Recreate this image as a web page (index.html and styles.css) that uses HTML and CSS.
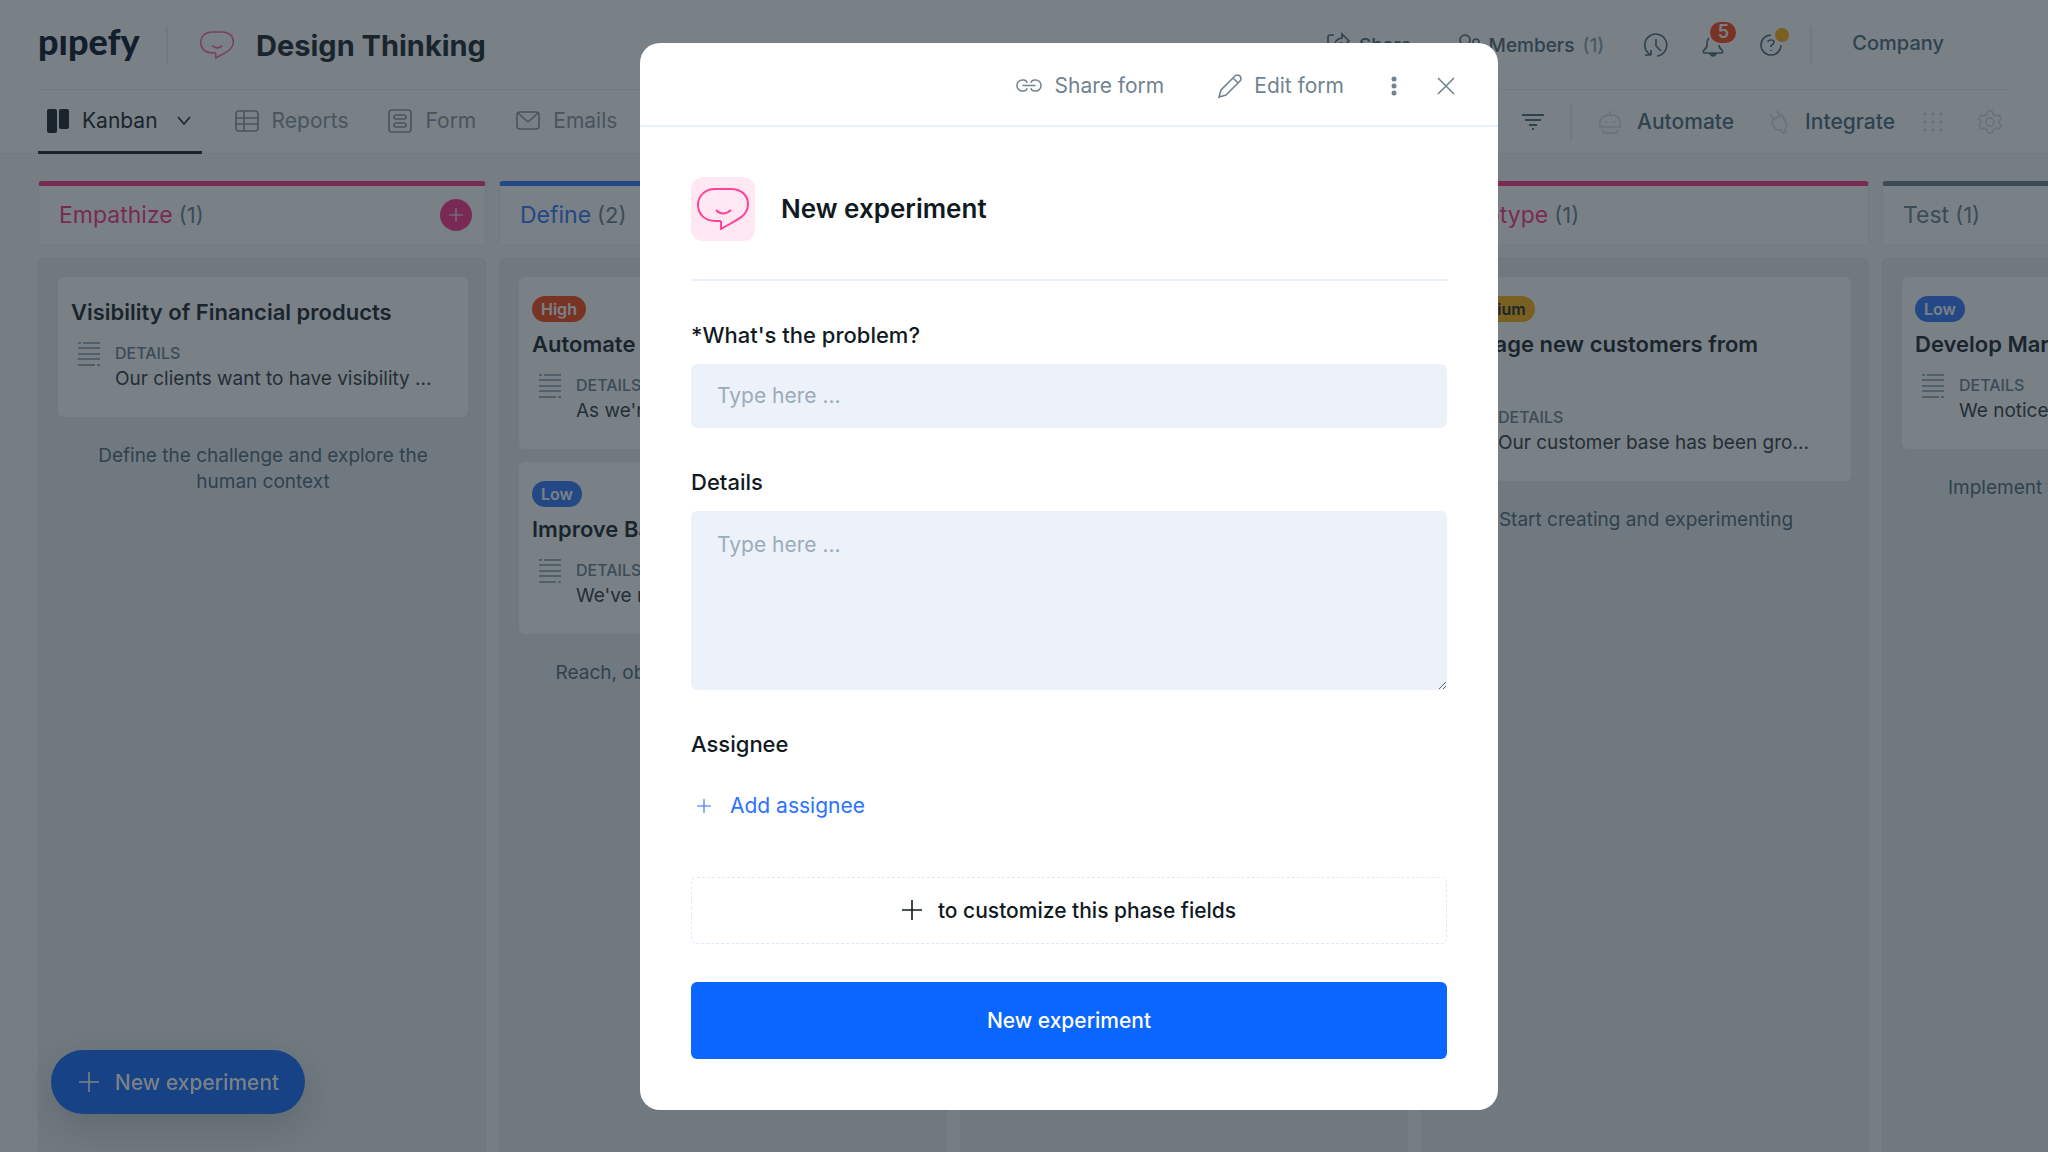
FILE: index.html
```
<!DOCTYPE html>
<html lang="en">
<head>
    <meta charset="utf-8">
    <title>Design Thinking</title>
    <link rel="stylesheet" href="styles.css">
</head>
<body>
    <!-- icons used more than once -->
    <svg width="0" height="0" class="sprite">
        <symbol id="chat" viewBox="0 0 52 42">
            <path d="M24 33H18C8 33 1 26 1 17S8 1 18 1H34C44 1 51 7 51 16C51 30 36 33 24 41V33"/>
            <path d="M19 22Q26 29 34 22"/>
        </symbol>
        <symbol id="plus" viewBox="0 0 20 20">
            <path d="M10 0V20M0 10H20"/>
        </symbol>
        <symbol id="lines" viewBox="0 0 22 26">
            <path d="M0 2H3M5 2H22M0 7H22M0 13H22M0 18H22M0 24H17M19 24H22"/>
        </symbol>
    </svg>

    <div class="page">
        <header class="topbar">
            <div class="brand">pıpefy</div>
            <div class="separator"></div>
            <svg class="icon pipe-icon" width="34" height="28"><use href="#chat"/></svg>
            <h1>Design Thinking</h1>
            <div class="top-actions">
                <a href="#" class="share">
                    <svg class="icon" width="24" height="24" viewBox="0 0 24 24"><path d="M7 2H3Q1 2 1 4V20Q1 22 3 22H19Q21 22 21 20V15M15 1L22 8L15 14V10Q9 10 7 15Q7 6 15 5Z"/></svg>
                    Share
                </a>
                <a href="#" class="members">
                    <svg class="icon" width="24" height="22" viewBox="0 0 24 22"><circle cx="8" cy="6" r="5"/><circle cx="19" cy="8" r="3"/><path d="M1 21Q1 13 8 13T15 21Z"/></svg>
                    Members <span>(1)</span>
                </a>
                <button class="icon-btn" aria-label="Activities">
                    <svg class="icon" width="24" height="24" viewBox="0 0 24 24"><path d="M7 22V17M1 22H7A11 11 0 1 1 13 23M12 6V13L17 18"/></svg>
                </button>
                <button class="icon-btn bell" aria-label="Notifications">
                    <svg class="icon" width="22" height="24" viewBox="0 0 22 24"><path d="M7 5Q5 7 5 12Q5 15 2 17Q0 20 3 20H19Q22 20 20 17Q17 15 17 12"/><path d="M8 21H14Q11 25 8 21Z" fill="currentColor"/></svg>
                    <span class="badge">5</span>
                </button>
                <button class="icon-btn help" aria-label="Help">
                    <svg class="icon" width="22" height="24" viewBox="0 0 22 24"><path d="M11 2A10 10 0 1 0 21 12"/><path d="M8 9Q8 7 11 7T14 9Q14 11 11 13V14M11 17V18"/></svg>
                    <span class="dot"></span>
                </button>
                <div class="separator"></div>
                <a href="#" class="company">Company</a>
            </div>
        </header>

        <nav class="tabs">
            <a href="#" class="tab active">
                <svg width="22" height="24" viewBox="0 0 22 24"><rect width="10" height="24" rx="2"/><rect x="12" width="10" height="20" rx="2"/></svg>
                Kanban
                <svg class="icon chevron" width="14" height="8" viewBox="0 0 14 8"><path d="M1 0L7 7L13 0"/></svg>
            </a>
            <a href="#" class="tab">
                <svg class="icon" width="24" height="22" viewBox="0 0 24 22"><rect x="1" y="1" width="22" height="20" rx="3"/><path d="M1 8H23M1 14H23M9 1V21"/></svg>
                Reports
            </a>
            <a href="#" class="tab">
                <svg class="icon" width="24" height="24" viewBox="0 0 24 24"><rect x="1" y="1" width="22" height="22" rx="3"/><rect x="6" y="6" width="12" height="4" rx="2"/><rect x="6" y="14" width="12" height="4" rx="2"/></svg>
                Form
            </a>
            <a href="#" class="tab">
                <svg class="icon" width="24" height="20" viewBox="0 0 24 20"><rect x="1" y="1" width="22" height="17" rx="3"/><path d="M2 2L12 11L22 2"/></svg>
                Emails
            </a>
            <div class="tools">
                <button class="icon-btn" aria-label="Filter">
                    <svg class="icon filter" width="22" height="18" viewBox="0 0 22 18"><path d="M0 2H22M3 7H19M7 12H15M10 16H12"/></svg>
                </button>
                <div class="separator"></div>
                <a href="#">
                    <svg class="icon faint" width="22" height="24" viewBox="0 0 22 24"><path d="M11 1V5M1 17V13Q1 5 11 5T21 13V17ZM3 20Q4 23 7 23H15Q18 23 19 20M7 11V13M15 11V13"/></svg>
                    Automate
                </a>
                <a href="#" class="integrate">
                    <svg class="icon faint" width="20" height="24" viewBox="0 0 20 24"><path d="M3 10L13 5L17 13Q19 17 16 19L17 22L14 23L12 20Q8 21 5 17Q3 14 3 10ZM5 9L1 4M11 6L8 1"/></svg>
                    Integrate
                </a>
                <button class="icon-btn apps" aria-label="Apps">
                    <svg class="faint" width="20" height="20" viewBox="0 0 20 20"><circle cx="2" cy="2" r="1.5"/><circle cx="10" cy="2" r="1.5"/><circle cx="18" cy="2" r="1.5"/><circle cx="2" cy="10" r="1.5"/><circle cx="10" cy="10" r="1.5"/><circle cx="18" cy="10" r="1.5"/><circle cx="2" cy="18" r="1.5"/><circle cx="10" cy="18" r="1.5"/><circle cx="18" cy="18" r="1.5"/></svg>
                </button>
                <button class="icon-btn" aria-label="Settings">
                    <svg class="icon faint" width="24" height="24" viewBox="0 0 24 24"><circle cx="12" cy="12" r="4"/><path d="M10 1H14L15 4L18 6L21 5L23 9L21 11V13L23 15L21 19L18 18L15 20L14 23H10L9 20L6 18L3 19L1 15L3 13V11L1 9L3 5L6 6L9 4Z"/></svg>
                </button>
            </div>
        </nav>

        <main class="board">
            <section class="column pink">
                <h2><span>Empathize</span> (1) <button class="add-card" aria-label="Add card"><svg class="icon" width="14" height="14"><use href="#plus"/></svg></button></h2>
                <div class="cards">
                    <article class="card">
                        <h3>Visibility of Financial products</h3>
                        <div class="field">
                            <svg class="icon" width="22" height="26"><use href="#lines"/></svg>
                            <div>
                                <h4>DETAILS</h4>
                                <p>Our clients want to have visibility ...</p>
                            </div>
                        </div>
                    </article>
                    <p class="hint">Define the challenge and explore the human context</p>
                </div>
            </section>

            <section class="column blue">
                <h2><span>Define</span> (2)</h2>
                <div class="cards">
                    <article class="card">
                        <div class="tag high">High</div>
                        <h3>Automate onboarding</h3>
                        <div class="field">
                            <svg class="icon" width="22" height="26"><use href="#lines"/></svg>
                            <div>
                                <h4>DETAILS</h4>
                                <p>As we're growing ...</p>
                            </div>
                        </div>
                    </article>
                    <article class="card">
                        <div class="tag low">Low</div>
                        <h3>Improve Banking app</h3>
                        <div class="field">
                            <svg class="icon" width="22" height="26"><use href="#lines"/></svg>
                            <div>
                                <h4>DETAILS</h4>
                                <p>We've received ...</p>
                            </div>
                        </div>
                    </article>
                    <p class="hint">Reach, observe and define the issues</p>
                </div>
            </section>

            <section class="column pink">
                <h2></h2>
                <div class="cards"></div>
            </section>

            <section class="column pink">
                <h2><span>Prototype</span> (1)</h2>
                <div class="cards">
                    <article class="card">
                        <div class="tag medium">Medium</div>
                        <h3 class="two-lines">Engage new customers from</h3>
                        <div class="field">
                            <svg class="icon" width="22" height="26"><use href="#lines"/></svg>
                            <div>
                                <h4>DETAILS</h4>
                                <p>Our customer base has been gro...</p>
                            </div>
                        </div>
                    </article>
                    <p class="hint">Start creating and experimenting</p>
                </div>
            </section>

            <section class="column grey">
                <h2><span>Test</span> (1)</h2>
                <div class="cards">
                    <article class="card">
                        <div class="tag low">Low</div>
                        <h3>Develop Marketing plan</h3>
                        <div class="field">
                            <svg class="icon" width="22" height="26"><use href="#lines"/></svg>
                            <div>
                                <h4>DETAILS</h4>
                                <p>We noticed ...</p>
                            </div>
                        </div>
                    </article>
                    <p class="hint">Implement the vision and its effects</p>
                </div>
            </section>
        </main>

        <button class="fab"><svg class="icon" width="20" height="20"><use href="#plus"/></svg>New experiment</button>
    </div>

    <div class="overlay">
        <div class="modal" role="dialog" aria-labelledby="modal-title">
            <div class="modal-header">
                <button class="share-form">
                    <svg class="icon" width="26" height="13" viewBox="0 0 28 14"><path d="M12 4Q11 1 8 1H7A6 6 0 0 0 7 13H8Q11 13 12 10M16 4Q17 1 20 1H21A6 6 0 0 1 21 13H20Q17 13 16 10M7 7H21"/></svg>
                    Share form
                </button>
                <button class="edit-form">
                    <svg class="icon" width="24" height="24" viewBox="0 0 24 24"><path d="M1 23L3 16L17 2Q19 0 22 2Q24 5 22 7L8 21ZM15 4L20 9"/></svg>
                    Edit form
                </button>
                <button class="more" aria-label="More options">
                    <svg width="6" height="20" viewBox="0 0 6 20"><circle cx="3" cy="3" r="2.5"/><circle cx="3" cy="10" r="2.5"/><circle cx="3" cy="17" r="2.5"/></svg>
                </button>
                <button aria-label="Close">
                    <svg class="icon" width="18" height="18" viewBox="0 0 18 18"><path d="M1 1L17 17M17 1L1 17"/></svg>
                </button>
            </div>
            <form class="modal-body">
                <div class="modal-title">
                    <div class="tile"><svg class="icon" width="52" height="42"><use href="#chat"/></svg></div>
                    <h2 id="modal-title">New experiment</h2>
                </div>

                <label for="problem">*What's the problem?</label>
                <input type="text" id="problem" name="problem" placeholder="Type here ...">

                <label for="details">Details</label>
                <textarea id="details" name="details" placeholder="Type here ..."></textarea>

                <label for="assignee">Assignee</label>
                <button type="button" id="assignee" class="add-assignee"><svg class="icon" width="14" height="14"><use href="#plus"/></svg>Add assignee</button>

                <button type="button" class="customize"><svg class="icon" width="20" height="20"><use href="#plus"/></svg>to customize this phase fields</button>
                <button type="submit" class="submit">New experiment</button>
            </form>
        </div>
    </div>
</body>
</html>
```
FILE: styles.css
```
* {
    box-sizing: border-box;
}

body {
    margin: 0;
    font-family: Inter, sans-serif;
    font-size: 21px;
    color: #111a1f;
    background: #f8f9fb;
}

h1, h2, h3, h4, p {
    margin: 0;
}

a {
    color: inherit;
    text-decoration: none;
}

button {
    display: flex;
    align-items: center;
    padding: 0;
    border: none;
    background: none;
    font: inherit;
    color: inherit;
    cursor: pointer;
}

svg {
    flex: none;
    fill: currentColor;
}

.icon {
    fill: none;
    stroke: currentColor;
    stroke-width: 1.6;
    overflow: visible;
}

.sprite {
    position: absolute;
}

.page {
    height: 100vh;
    display: flex;
    flex-direction: column;
    overflow: hidden;
}

.separator {
    width: 2px;
    height: 38px;
    background: #ebeff2;
}

/* top bar */
.topbar {
    display: flex;
    align-items: center;
    height: 90px;
    padding: 0 38px;
    background: linear-gradient(#ebeff2, #ebeff2) center bottom / calc(100% - 76px) 1px no-repeat #fff;
}

.brand {
    width: 128px;
    padding-bottom: 8px;
    font-family: Lato, sans-serif;
    font-size: 36px;
    font-weight: 900;
    color: #000c1f;
}

.pipe-icon {
    margin: 0 22px 0 32px;
    color: #ff5fa2;
    stroke-width: 2.4;
}

h1 {
    font-size: 29px;
    font-weight: 700;
}

.top-actions {
    display: flex;
    align-items: center;
    margin-left: auto;
    color: #466473;
}

.top-actions a {
    display: flex;
    align-items: center;
    gap: 8px;
}

.top-actions .members {
    margin: 0 40px 0 45px;
}

.share,
.members {
    font-size: 19px;
    font-weight: 500;
}

.members span {
    color: #8ba0ad;
}

.icon-btn {
    position: relative;
}

.bell {
    margin: 0 36px 0 34px;
}

.help {
    margin-right: 28px;
}

.badge {
    position: absolute;
    top: -11px;
    left: 8px;
    width: 26px;
    height: 21px;
    border-radius: 11px;
    background: #ff400d;
    color: #fff;
    font-size: 18px;
    font-weight: 600;
    line-height: 20px;
}

.dot {
    position: absolute;
    top: -5px;
    left: 15px;
    width: 14px;
    height: 14px;
    border-radius: 50%;
    background: #ffac00;
}

.company {
    padding: 0 66px 4px 40px;
    font-size: 20px;
    font-weight: 500;
}

/* tabs */
.tabs {
    display: flex;
    height: 64px;
    padding: 0 38px;
    border-bottom: 1px solid #ebeff2;
    background: #fff;
}

.tab {
    display: flex;
    align-items: center;
    gap: 13px;
    height: 64px;
    margin-right: 40px;
    border-bottom: 3px solid transparent;
    color: #84929b;
}

.tab.active {
    padding: 0 11px 0 9px;
    margin-right: 33px;
    border-color: #111a1f;
    color: #111a1f;
}

.chevron {
    margin-left: 6px;
}

.tools {
    display: flex;
    align-items: center;
    margin-left: auto;
    padding-right: 8px;
    color: #466473;
    font-weight: 500;
}

.tools a {
    display: flex;
    align-items: center;
    gap: 16px;
}

.tools .separator {
    margin: 0 27px 0 26px;
}

.tools .integrate {
    margin: 0 28px 0 35px;
}

.apps {
    margin-right: 35px;
}

.filter {
    stroke-width: 2;
}

.faint {
    color: #d5dbe0;
}

/* board */
.board {
    flex: 1;
    display: flex;
    gap: 13px;
    padding: 27px 38px 0;
}

.column {
    flex: 0 0 448px;
    display: flex;
    flex-direction: column;
    gap: 13px;
}

.column h2 {
    display: flex;
    align-items: center;
    gap: 6px;
    height: 64px;
    padding: 0 13px 0 20px;
    border: 1px solid #f0f2f5;
    border-top: 5px solid;
    border-radius: 4px;
    background: #fff;
    font-size: 22px;
    font-weight: 400;
    color: #657c8a;
}

.column h2 span {
    font-size: 23px;
}

.pink h2 {
    border-top-color: #ff2a83;
}

.pink h2 span {
    color: #ff2a83;
}

.blue h2 {
    border-top-color: #2b73ff;
}

.blue h2 span {
    color: #2b73ff;
}

.grey h2 {
    border-top-color: #657c8a;
}

.add-card {
    justify-content: center;
    width: 32px;
    height: 32px;
    margin-left: auto;
    border-radius: 50%;
    background: #ff2a83;
    color: #fff;
}

.cards {
    flex: 1;
    padding: 18px 17px 18px 19px;
    border: 1px solid #e3e8ec;
    border-bottom: none;
    border-radius: 6px 6px 0 0;
    background: #ebeef0;
}

.card {
    padding: 19px 13px 24px;
    margin-bottom: 13px;
    border-radius: 6px;
    background: #fff;
}

.card h3 {
    font-size: 22px;
    font-weight: 600;
    line-height: 32px;
    margin-bottom: 13px;
}

.card .two-lines {
    min-height: 64px;
}

.field {
    display: flex;
    gap: 15px;
    padding-left: 7px;
}

.field svg {
    color: #99adb5;
    stroke-width: 2;
}

.field h4 {
    font-size: 16px;
    font-weight: 500;
    line-height: 24px;
    color: #657c8a;
}

.field p {
    font-size: 19px;
    line-height: 28px;
    color: #2c3338;
}

.tag {
    width: fit-content;
    height: 26px;
    padding: 0 9px;
    margin-bottom: 6px;
    border-radius: 13px;
    font-size: 16px;
    font-weight: 600;
    line-height: 26px;
    color: #fff;
}

.high {
    background: #ff400d;
}

.low {
    background: #2b73ff;
}

.medium {
    background: #ffac00;
    color: #111a1f;
}

.hint {
    padding: 13px 25px;
    text-align: center;
    font-size: 19px;
    line-height: 26px;
    color: #466473;
}

.fab {
    position: fixed;
    left: 51px;
    bottom: 38px;
    gap: 16px;
    height: 64px;
    padding: 0 26px 0 28px;
    border-radius: 32px;
    background: #0b66ff;
    box-shadow: 0 13px 38px rgba(17, 26, 31, 0.2);
    color: #fff;
    font-weight: 500;
}

.overlay {
    position: fixed;
    inset: 0;
    display: flex;
    align-items: center;
    justify-content: center;
    padding-left: 90px;
    background: rgba(32, 43, 53, 0.6);
}

.modal {
    width: 100%;
    max-width: 858px;
    border-radius: 20px;
    background: #fff;
}

.modal-header {
    display: flex;
    align-items: center;
    justify-content: flex-end;
    height: 84px;
    padding: 4px 43px 0;
    border-bottom: 2px solid #e8f1fa;
    color: #6f8390;
}

.share-form {
    gap: 12px;
}

.edit-form {
    gap: 12px;
    margin: 0 47px 0 54px;
}

.more {
    margin-right: 40px;
}

.modal-body {
    padding: 50px 51px 51px;
}

.modal-title {
    display: flex;
    align-items: center;
    gap: 26px;
    padding-bottom: 38px;
    border-bottom: 2px solid #e8f1fa;
}

.modal-title h2 {
    font-size: 26px;
    font-weight: 600;
}

.tile {
    display: flex;
    align-items: center;
    justify-content: center;
    width: 64px;
    height: 64px;
    border-radius: 12px;
    background: #ffe8f2;
    color: #ff4498;
}

.tile svg {
    stroke-width: 2;
}

label {
    display: block;
    margin: 40px 0 15px;
    font-size: 22px;
    font-weight: 500;
    line-height: 28px;
}

input,
textarea {
    display: block;
    width: 100%;
    padding: 18px 26px;
    border: none;
    border-radius: 6px;
    background: #edf1f9;
    font: inherit;
    line-height: 28px;
}

textarea {
    height: 179px;
    padding-top: 20px;
    resize: vertical;
}

::placeholder {
    color: #9aacb9;
}

.add-assignee {
    gap: 19px;
    margin: 34px 0 57px 6px;
    color: #2b73ff;
    line-height: 28px;
}

.customize {
    justify-content: center;
    gap: 16px;
    width: 100%;
    height: 67px;
    margin-bottom: 38px;
    border: 1px dashed #dcebf8;
    border-radius: 6px;
    font-weight: 500;
}

.submit {
    justify-content: center;
    width: 100%;
    height: 77px;
    border-radius: 6px;
    background: #0b66ff;
    color: #fff;
    font-weight: 500;
}
```
